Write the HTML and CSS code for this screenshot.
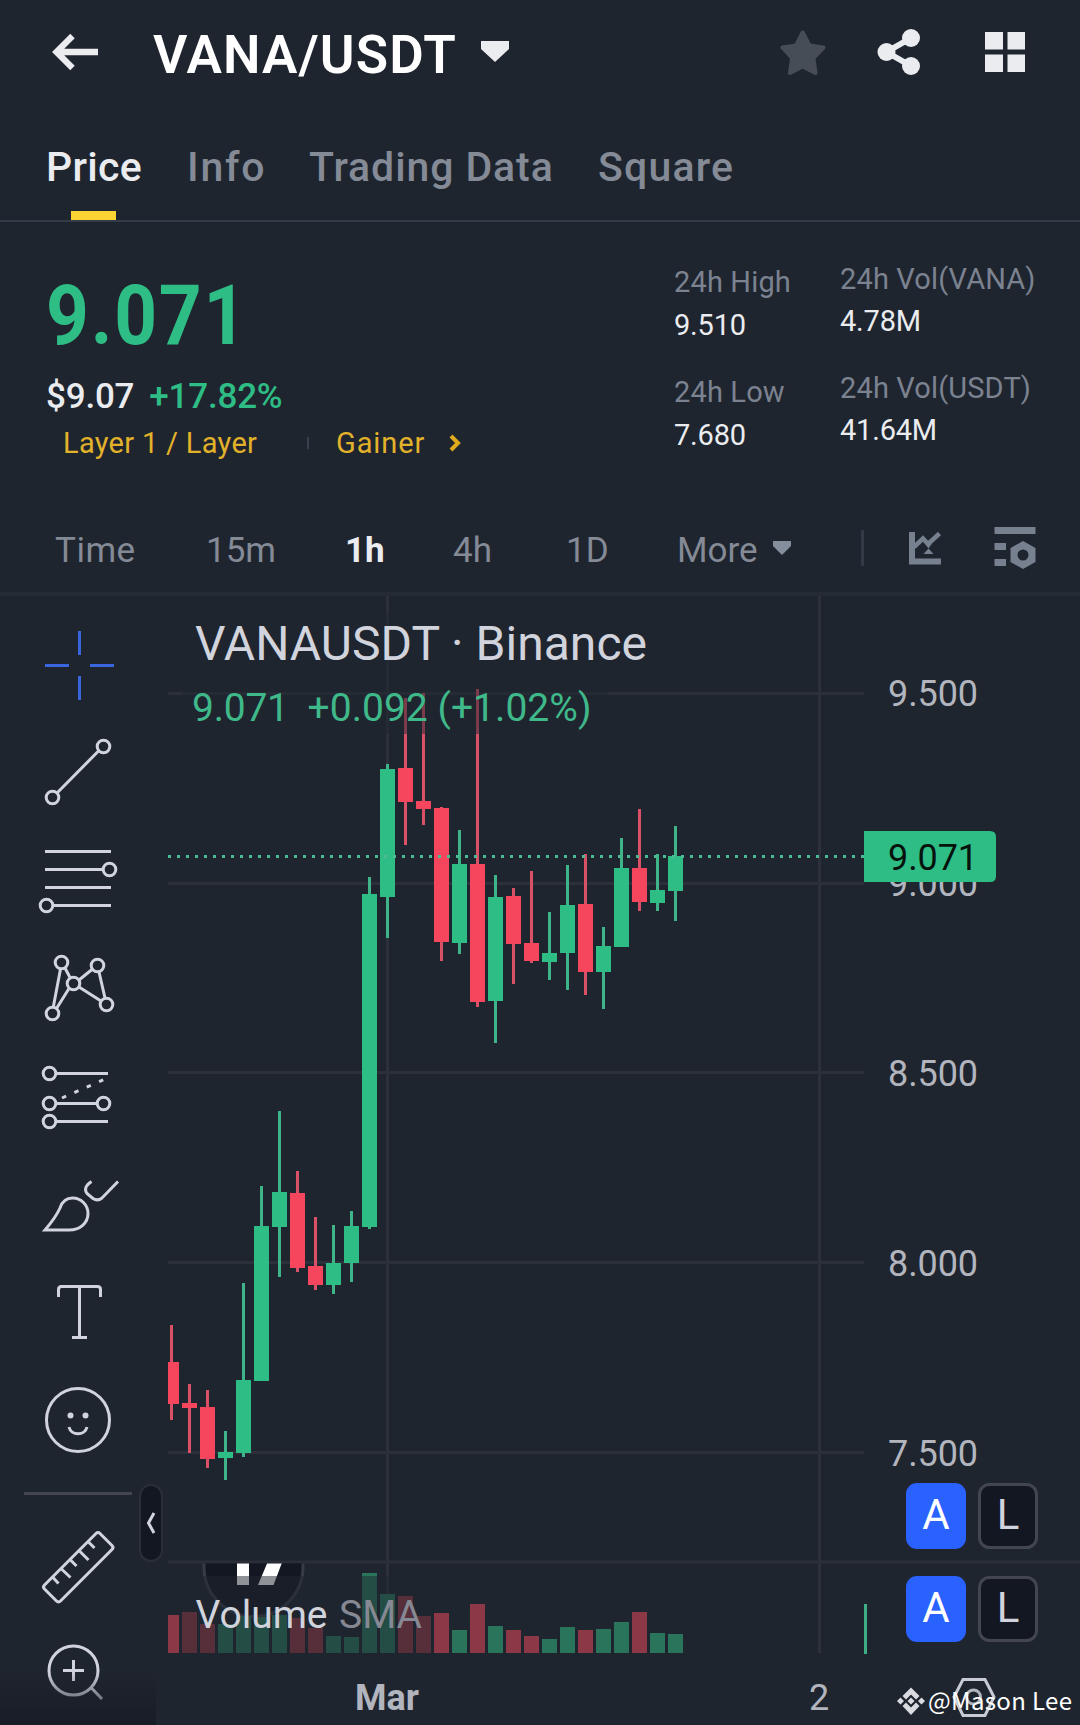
FILE: index.html
```html
<!DOCTYPE html>
<html lang="en">
<head>
    <meta charset="UTF-8">
    <meta name="viewport" content="width=device-width, initial-scale=1.0">
    <title>VANA/USDT</title>
    <link rel="stylesheet" href="styles.css">
</head>
<body>
    <header class="header">
        <svg class="back" width="48" height="40" viewBox="52 32 48 40">
            <path d="M98 52H57M72.500 36L56.500 52L72.500 68" fill="none" stroke="#eaecef" stroke-width="6.300"/>
        </svg>
        <h1 class="pair">VANA/USDT</h1>
        <svg class="pair-caret" width="28" height="22" viewBox="0 0 28 22">
            <path d="M0 0H28V8L14 21L0 8Z" fill="#eaecef"/>
        </svg>
        <div class="header-icons">
            <svg width="46" height="48" viewBox="780 28 46 48">
                <path d="M802.700 32.500L809.500 45.500L823.500 47.500L813.500 58L815.500 73L802.700 66.500L790 73L792 58L782.500 47.500L796 45.500Z" fill="#474d57" stroke="#474d57" stroke-width="4" stroke-linejoin="round"/>
            </svg>
            <svg width="44" height="48" viewBox="877 28 44 48">
                <path d="M911 38L886.500 52L911 66" fill="none" stroke="#eaecef" stroke-width="6"/>
                <circle cx="911" cy="38" r="9" fill="#eaecef"/>
                <circle cx="886.500" cy="52" r="9" fill="#eaecef"/>
                <circle cx="911" cy="66" r="9" fill="#eaecef"/>
            </svg>
            <svg width="40" height="40" viewBox="0 0 40 40">
                <path d="M0 0H18V17.500H0ZM22.500 0H40V17.500H22.500ZM0 22.500H18V40H0ZM22.500 22.500H40V40H22.500Z" fill="#eaecef"/>
            </svg>
        </div>
    </header>

    <nav class="tabs">
        <a class="tab active">Price</a>
        <a class="tab info">Info</a>
        <a class="tab trading">Trading Data</a>
        <a class="tab square">Square</a>
    </nav>

    <section class="summary">
        <div class="price-box">
            <div class="price">9.071</div>
            <div class="change"><span class="usd">$9.07</span><span class="up">+17.82%</span></div>
            <div class="tags">
                <span class="layer">Layer 1 / Layer</span>
                <i class="tag-line"></i>
                <span class="gainer">Gainer</span>
                <svg width="12" height="18" viewBox="0 0 12 18"><path d="M2 2L9 9L2 16" fill="none" stroke="#e0ab1c" stroke-width="4"/></svg>
            </div>
        </div>
        <div class="stats first">
            <div class="stat"><span class="label">24h High</span><span class="value">9.510</span></div>
            <div class="stat"><span class="label">24h Low</span><span class="value">7.680</span></div>
        </div>
        <div class="stats second">
            <div class="stat"><span class="label">24h Vol(VANA)</span><span class="value">4.78M</span></div>
            <div class="stat"><span class="label">24h Vol(USDT)</span><span class="value">41.64M</span></div>
        </div>
    </section>

    <nav class="intervals">
        <span class="time">Time</span>
        <span>15m</span>
        <span class="selected">1h</span>
        <span>4h</span>
        <span>1D</span>
        <span>More</span>
        <svg class="more-caret" width="18" height="14" viewBox="0 0 18 14"><path d="M0 0H18V5L9 14L0 5Z" fill="#848e9c"/></svg>
        <i class="interval-line"></i>
        <svg class="interval-icon" width="34" height="34" viewBox="908 530 34 34">
            <path d="M912 531V560.500H941" fill="none" stroke="#76808f" stroke-width="6"/>
            <path d="M914 546L923 537.500L928 543L939.500 532.500" fill="none" stroke="#76808f" stroke-width="4.500"/>
            <path d="M923.500 553H933.500L928.500 547.500Z" fill="#76808f"/>
            <path d="M925.500 543H931.500L928.500 547.500Z" fill="#76808f"/>
        </svg>
        <svg class="interval-icon" width="42" height="44" viewBox="994 526 42 44">
            <path d="M994.500 527H1035.500V534H994.500ZM994.500 543H1006V550H994.500ZM994.500 559H1006V566H994.500Z" fill="#76808f"/>
            <path fill-rule="evenodd" d="M1023 541L1035.500 548V562L1023 569L1010.500 562V548ZM1023 549.500A5.500 5.500 0 1 0 1023 560.500A5.500 5.500 0 1 0 1023 549.500Z" fill="#76808f"/>
        </svg>
    </nav>

    <main class="chart-area">
        <aside class="tools">
            <!-- crosshair -->
            <svg viewBox="24 611 114 108"><path class="blue" d="M45 665.500H69M90 665.500H114M79.500 631V655M79.500 676V700"/></svg>
            <!-- trend line -->
            <svg viewBox="24 719 114 108">
                <path d="M57 793L98.500 751"/>
                <circle cx="103.500" cy="746.500" r="6.300"/><circle cx="52.500" cy="797.500" r="6.300"/>
            </svg>
            <!-- fib retracement -->
            <svg viewBox="24 827 114 108">
                <path d="M45 851.500H111M45 869.500H103M45 887.500H111M53 905.500H111"/>
                <circle cx="109.500" cy="869.500" r="6.300"/><circle cx="46.500" cy="905.500" r="6.300"/>
            </svg>
            <!-- pattern -->
            <svg viewBox="24 935 114 108">
                <path d="M60.500 969L53.300 1007M65 968L70 977.500M56.500 1008.500L69 988.500M79 980L92 969.500M79 987L101 1001M99 972L105 998"/>
                <circle cx="61.500" cy="962.500" r="6.300"/><circle cx="97.500" cy="965.500" r="6.300"/><circle cx="73.500" cy="983.500" r="6.300"/>
                <circle cx="106.500" cy="1004.500" r="6.300"/><circle cx="52.500" cy="1013.500" r="6.300"/>
            </svg>
            <!-- forecast -->
            <svg viewBox="24 1043 114 108">
                <path d="M56 1073.500H108M56 1103.500H97M56 1121.500H108"/>
                <path d="M62 1098L104 1079.500" stroke-dasharray="4.500 9"/>
                <circle cx="49.500" cy="1073.500" r="6.300"/><circle cx="49.500" cy="1103.500" r="6.300"/>
                <circle cx="103.500" cy="1103.500" r="6.300"/><circle cx="49.500" cy="1121.500" r="6.300"/>
            </svg>
            <!-- brush -->
            <svg viewBox="24 1151 114 108">
                <path d="M45 1230C51 1223 56 1217 60 1208C62 1202 66 1198 72.500 1198C81 1198 88 1205 88 1213.500C88 1223 80 1230 69 1230Z"/>
                <path d="M91.500 1181.500C85 1186 84 1190 87.500 1194L93 1198.500Q97.500 1201.500 102 1198L118 1181.500"/>
            </svg>
            <!-- text -->
            <svg viewBox="24 1259 114 108"><path d="M58.500 1297V1289.500Q58.500 1286.500 61.500 1286.500H97.500Q100.500 1286.500 100.500 1289.500V1297M79.500 1286.500V1337.500M72 1337.500H87"/></svg>
            <!-- emoji -->
            <svg viewBox="24 1367 114 108">
                <circle cx="78" cy="1420" r="31.500"/>
                <circle class="dot" cx="70.500" cy="1415.500" r="3"/><circle class="dot" cx="85.500" cy="1415.500" r="3"/>
                <path d="M69 1427C71 1436 85 1436 87 1427"/>
            </svg>
            <i class="tools-line"></i>
            <!-- ruler -->
            <svg viewBox="24 1515 114 108">
                <path d="M96 1533.500Q98 1531.500 100 1533.500L112 1545.500Q114 1547.500 112 1549.500L60.500 1601Q58.500 1603 56.500 1601L44.500 1589Q42.500 1587 44.500 1585Z"/>
                <path d="M52.500 1577L58.500 1583.500M61.500 1569L70.500 1577.500M70.500 1560L76.500 1566M79.500 1551L88.500 1560M88.500 1542L94.500 1548"/>
            </svg>
            <!-- zoom in -->
            <svg viewBox="24 1623 114 102" class="zoom"><circle cx="73.500" cy="1670.500" r="24.500"/><path d="M63 1670.500H84M73.500 1660V1681M90.500 1687L102 1699"/></svg>
            <div class="fade"></div>
            <div class="collapse">
                <svg viewBox="0 0 10 24"><path d="M8 2L2.500 12L8 22"/></svg>
            </div>
        </aside>

        <svg class="chart" width="912" height="1129" viewBox="168 596 912 1129">
            <g id="grid"></g>
            <path d="M168 1562H1080" stroke="#2a2e39" stroke-width="3"/>

            <!-- logo badge, cut off by the pane border -->
            <clipPath id="pane"><rect x="168" y="1563.500" width="912" height="100"/></clipPath>
            <g clip-path="url(#pane)">
                <circle cx="253.500" cy="1567" r="49.500" fill="#131722" stroke="#363b46" stroke-width="3"/>
                <path d="M237 1560H249V1585H237ZM268.500 1560H283L273.500 1585H258Z" fill="#ffffff"/>
            </g>

            <g id="volume"></g>
            <g id="candles"></g>
            <path d="M168 856.500H864" stroke="#4cbb91" stroke-width="3" stroke-dasharray="3 6"/>
            <rect x="181" y="612" width="427" height="122" class="veil"/>
            <rect x="181" y="1576" width="251" height="78" class="veil"/>
            <path d="M865.500 1604V1654" stroke="#3fae84" stroke-width="3"/>

            <text x="195" y="660" class="symbol" textLength="452">VANAUSDT · Binance</text>
            <text x="192" y="721" class="legend" textLength="97">9.071</text>
            <text x="307.500" y="721" class="legend" textLength="284">+0.092 (+1.02%)</text>
            <text x="195.500" y="1628" class="vol-title" textLength="132">Volume</text>
            <text x="339" y="1628" class="vol-title sma" textLength="83">SMA</text>

            <text x="888" y="706" class="axis" textLength="90">9.500</text>
            <text x="888" y="896" class="axis" textLength="90">9.000</text>
            <text x="888" y="1086" class="axis" textLength="90">8.500</text>
            <text x="888" y="1276" class="axis" textLength="90">8.000</text>
            <text x="888" y="1466" class="axis" textLength="90">7.500</text>
            <path d="M864 831H990Q996 831 996 837V876Q996 882 990 882H864Z" fill="#2ebd85"/>
            <text x="888" y="870" class="axis tag" textLength="90">9.071</text>

            <rect x="906" y="1483" width="60" height="66" rx="11" fill="#2962ff"/>
            <rect x="979.500" y="1484.500" width="57" height="63" rx="10" class="scale-off"/>
            <text x="936" y="1529" class="scale">A</text>
            <text x="1008" y="1529" class="scale off">L</text>
            <rect x="906" y="1576" width="60" height="66" rx="11" fill="#2962ff"/>
            <rect x="979.500" y="1577.500" width="57" height="63" rx="10" class="scale-off"/>
            <text x="936" y="1622" class="scale">A</text>
            <text x="1008" y="1622" class="scale off">L</text>

            <text x="387" y="1710" class="date bold">Mar</text>
            <text x="819" y="1710" class="date">2</text>

            <path d="M963 1679.500H985L994 1697L985 1715.500H963L954 1697Z" fill="none" stroke="#c8cbd3" stroke-width="3"/>
            <circle cx="973.500" cy="1697" r="7" fill="none" stroke="#b2b5be" stroke-width="3"/>
            <g fill="#d9dbe0">
                <path d="M911 1687.500L919.500 1696L916 1699.500L911 1694.500L906 1699.500L902.500 1696Z"/>
                <path d="M911 1715L919.500 1706L916 1702.500L911 1707.500L906 1702.500L902.500 1706Z"/>
                <path d="M911 1697.500L914.500 1701L911 1704.500L907.500 1701ZM900.500 1697.500L904 1701L900.500 1704.500L897 1701ZM921.500 1697.500L925 1701L921.500 1704.500L918 1701Z"/>
            </g>
            <text x="928" y="1710" class="author" textLength="144">@Mason Lee</text>
        </svg>
    </main>

    <script>
        const UP = "#2ebd85";
        const DOWN = "#f6465d";

        // direction, high, body top, body bottom, low, volume top
        const bars = [
            ["d", 1325, 1362, 1404, 1420, 1615],
            ["d", 1384, 1403, 1408, 1453, 1612],
            ["d", 1390, 1407, 1459, 1468, 1624],
            ["u", 1431, 1452, 1458, 1480, 1624],
            ["u", 1283, 1380, 1453, 1457, 1616],
            ["u", 1186, 1226, 1381, 1381, 1617],
            ["u", 1111, 1192, 1227, 1277, 1615],
            ["d", 1171, 1193, 1268, 1272, 1618],
            ["d", 1217, 1266, 1285, 1290, 1628],
            ["u", 1225, 1263, 1285, 1294, 1636],
            ["u", 1211, 1226, 1263, 1282, 1637],
            ["u", 877, 894, 1227, 1229, 1573],
            ["u", 764, 769, 897, 938, 1594],
            ["d", 698, 768, 802, 845, 1596],
            ["d", 693, 801, 809, 825, 1616],
            ["d", 807, 808, 942, 961, 1613],
            ["u", 830, 864, 943, 954, 1630],
            ["d", 689, 864, 1002, 1007, 1604],
            ["u", 875, 897, 1001, 1043, 1626],
            ["d", 888, 896, 944, 984, 1630],
            ["d", 871, 943, 961, 963, 1636],
            ["u", 912, 953, 962, 980, 1639],
            ["u", 865, 905, 953, 990, 1627],
            ["d", 854, 904, 972, 995, 1630],
            ["u", 927, 946, 972, 1009, 1629],
            ["u", 838, 868, 947, 947, 1622],
            ["d", 809, 868, 902, 911, 1612],
            ["u", 854, 890, 903, 911, 1633],
            ["u", 826, 856, 891, 921, 1634]
        ];

        function rect(x, y, w, h, color) {
            return `<rect x="${x}" y="${y}" width="${w}" height="${h}" fill="${color}"/>`;
        }

        let candles = "";
        let volume = "";
        bars.forEach(([dir, high, top, bottom, low, vol], i) => {
            const x = 164 + i * 18;
            candles += rect(x + 6, high, 3, low - high, dir === "u" ? "#3fb488" : "#d95067");
            candles += rect(x, top, 15, bottom - top, dir === "u" ? UP : DOWN);
            volume += rect(x, vol, 15, 1653 - vol, dir === "u" ? "#29745b" : "#8c3846");
        });
        document.getElementById("candles").innerHTML = candles;
        document.getElementById("volume").innerHTML = volume;

        let grid = "";
        [692, 882, 1071, 1261, 1451].forEach(y => grid += rect(168, y, 696, 3, "#2b303b"));
        [386, 818].forEach(x => grid += rect(x, 596, 3, 1057, "#2b303b"));
        document.getElementById("grid").innerHTML = grid;
    </script>
</body>
</html>
```
FILE: styles.css
```css
* {
    box-sizing: border-box;
}

body {
    margin: 0;
    width: 1080px;
    height: 1725px;
    overflow: hidden;
    background-color: #1f252f;
    color: #eaecef;
    font-family: Roboto, "Liberation Sans", sans-serif;
}

svg {
    display: block;
    flex-shrink: 0;
}

/* Header */
.header {
    display: flex;
    align-items: center;
    height: 104px;
    padding: 0 55px 0 52px;
}

.pair {
    width: 306px;
    margin: 0 0 0 53px;
    padding-top: 5px;
    font-size: 53px;
    line-height: 60px;
    font-weight: 600;
    letter-spacing: 1.1px;
    white-space: nowrap;
    color: #ffffff;
}

.pair-caret {
    margin-left: 22px;
}

.header-icons {
    display: flex;
    align-items: center;
    margin-left: auto;
}

.header-icons svg + svg {
    margin-left: 51px;
}

.header-icons svg:last-child {
    margin-left: 64px;
}

/* Tabs */
.tabs {
    display: grid;
    grid-template-columns: 141px 122px 289px 140px;
    height: 118px;
    padding-left: 46px;
    border-bottom: 2px solid #333b47;
}

.tab {
    position: relative;
    justify-self: start;
    padding-top: 39px;
    font-size: 41px;
    line-height: 49px;
    font-weight: 500;
    white-space: nowrap;
    color: #848a96;
}

.tab.active {
    letter-spacing: 0.3px;
    color: #eaecef;
}

.tab.active::after {
    content: "";
    position: absolute;
    left: 25px;
    bottom: 0;
    width: 45px;
    height: 9px;
    background-color: #fcd535;
}

.info {
    letter-spacing: 1.8px;
}

.trading {
    letter-spacing: 0.9px;
}

.square {
    letter-spacing: 1.2px;
}

/* Price and 24h numbers */
.summary {
    display: flex;
    height: 285px;
    padding-left: 46px;
}

.price-box {
    width: 628px;
    padding-top: 52px;
}

/* narrow digits */
.price {
    font-size: 84px;
    line-height: 84px;
    font-weight: 700;
    letter-spacing: 2px;
    transform: scaleX(0.89);
    transform-origin: left;
    color: #2ebd85;
}

.change {
    display: flex;
    gap: 15px;
    margin-top: 17px;
    font-size: 35px;
    line-height: 44px;
    font-weight: 500;
    letter-spacing: -0.2px;
}

.up {
    color: #2ebd85;
}

.tags {
    display: flex;
    align-items: center;
    margin-top: 4px;
    padding-left: 17px;
    font-size: 29px;
    line-height: 40px;
    color: #e2b22a;
}

.layer {
    width: 244px;
    letter-spacing: 0.3px;
}

.tag-line {
    width: 2px;
    height: 12px;
    background-color: #39404c;
}

.gainer {
    width: 113px;
    margin-left: 27px;
    letter-spacing: 0.9px;
}

.stats {
    display: flex;
    flex-direction: column;
    font-size: 29px;
}

.first {
    width: 166px;
    padding-top: 39px;
    line-height: 43px;
    gap: 24px;
}

.second {
    padding-top: 36px;
    line-height: 42px;
    gap: 25px;
}

.stat {
    display: flex;
    flex-direction: column;
}

.label {
    letter-spacing: 0.15px;
    color: #7b8290;
}

.value {
    letter-spacing: -0.2px;
}

/* Interval bar */
.intervals {
    display: grid;
    grid-template-columns: 151px 139px 108px 113px 111px 96px 88px 47px 86px 42px;
    align-items: center;
    height: 89px;
    padding: 1px 0 0 55px;
    border-bottom: 4px solid #252b35;
    font-size: 35px;
    color: #848a96;
}

.time {
    letter-spacing: 0.5px;
}

.selected {
    color: #eaecef;
    font-weight: 700;
}

.more-caret {
    margin: 0 0 5px;
}

.interval-line {
    width: 3px;
    height: 36px;
    margin-bottom: 5px;
    background-color: #333b47;
}

.interval-icon {
    margin-bottom: 5px;
}

/* Drawing tools */
.chart-area {
    display: flex;
    height: 1129px;
}

.tools {
    position: relative;
    width: 168px;
    padding: 15px 0 0 24px;
}

.tools > svg {
    width: 114px;
    height: 108px;
}

.tools > .zoom {
    height: 102px;
}

.tools svg {
    fill: none;
    stroke: #d1d4dc;
    stroke-width: 3;
}

.tools .blue {
    stroke: #3966dc;
}

.tools .dot {
    fill: #d1d4dc;
    stroke: none;
}

.tools-line {
    display: block;
    width: 108px;
    height: 3px;
    margin: 17px 0 20px;
    background-color: #434651;
}

.fade {
    position: absolute;
    left: 0;
    bottom: 0;
    width: 156px;
    height: 54px;
    background: linear-gradient(rgba(23, 28, 38, 0), rgba(23, 28, 38, 0.95));
}

.collapse {
    position: absolute;
    left: 139px;
    top: 888px;
    display: flex;
    align-items: center;
    justify-content: center;
    width: 24px;
    height: 78px;
    border: 2px solid #2a2e39;
    border-radius: 12px;
    background-color: #131722;
}

.collapse svg {
    width: 10px;
    height: 24px;
}

/* Chart */
.veil {
    fill: #1f252f;
    opacity: 0.5;
}

.symbol {
    font-size: 48px;
    fill: #d1d4dc;
}

.legend {
    font-size: 39px;
    fill: #3fb98a;
}

.vol-title {
    font-size: 39px;
    fill: #d1d4dc;
}

.sma {
    fill: #868993;
}

.axis,
.date {
    font-size: 36px;
    fill: #b2b5be;
}

.tag {
    fill: #06130d;
}

.date {
    text-anchor: middle;
}

.bold {
    font-weight: 700;
}

.scale {
    font-size: 42px;
    text-anchor: middle;
    fill: #ffffff;
}

.scale.off {
    fill: #d1d4dc;
}

.scale-off {
    fill: #131722;
    stroke: #434651;
    stroke-width: 3;
}

.author {
    font-family: "Noto Sans CJK SC", "Noto Sans", sans-serif;
    font-size: 24px;
    fill: #ffffff;
}
```
